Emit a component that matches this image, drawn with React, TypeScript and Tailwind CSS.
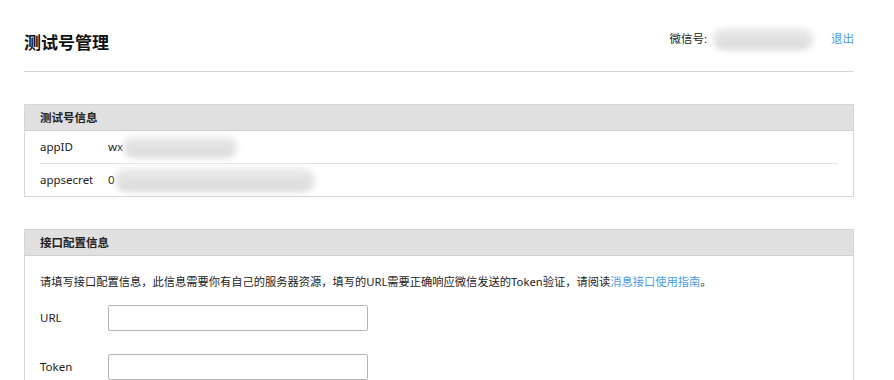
const font = { fontFamily: '"Noto Sans", "Noto Sans CJK SC", sans-serif' };

function Blur({ className }: { className: string }) {
  return (
    <span
      className={`inline-block rounded-full blur-[3px] bg-gradient-to-b from-[#ececec] to-[#d9d9d9] ${className}`}
    />
  );
}

function Panel({ title, children }: { title: string; children: React.ReactNode }) {
  return (
    <div className="border border-[#d6d6d6]">
      <div className="h-[26px] px-[15px] flex items-center bg-[#e0e0e0] border-b border-[#cfcfcf] text-[11.5px] font-bold text-[#222]">
        {title}
      </div>
      {children}
    </div>
  );
}

function InfoRow({ label, last, children }: { label: string; last?: boolean; children: React.ReactNode }) {
  return (
    <div className={`flex items-center ${last ? "h-[32px]" : "h-[33px] border-b border-[#e4e4e4]"}`}>
      <span className="w-[68px]">{label}</span>
      <span className="flex items-center">{children}</span>
    </div>
  );
}

function Field({ label }: { label: string }) {
  return (
    <div className="flex items-center h-[26px]">
      <span className="w-[68px]">{label}</span>
      <input className="w-[260px] h-[26px] rounded-[2px] border border-[#b5b5b5] bg-white outline-none" />
    </div>
  );
}

export default function App() {
  return (
    <div className="w-[894px] h-[380px] overflow-hidden bg-white text-[11.5px] text-[#222]" style={font}>
      <div className="ml-6 w-[830px]">
        <div className="h-[72px] flex justify-between items-start border-b border-[#d5d5d5]">
          <h1 className="pt-[31px] text-[17px] leading-[24px] font-bold text-[#111]">测试号管理</h1>
          <div className="pt-[28px] flex items-center">
            <span className="leading-[20px]">微信号:</span>
            <Blur className="ml-[6px] w-[100px] h-[22px] rounded-[10px]" />
            <a className="ml-[18px] text-[#4a9be6] leading-[20px]">退出</a>
          </div>
        </div>

        <div className="mt-8">
          <Panel title="测试号信息">
            <div className="mx-[15px]">
              <InfoRow label="appID">
                <span>wx</span>
                <Blur className="w-[114px] h-[22px] rounded-[8px]" />
              </InfoRow>
              <InfoRow label="appsecret" last>
                <span>0</span>
                <Blur className="w-[200px] h-[24px] rounded-[12px]" />
              </InfoRow>
            </div>
          </Panel>
        </div>

        <div className="mt-8">
          <Panel title="接口配置信息">
            <div className="px-[15px] pt-[16px]">
              <p className="text-[11.25px] leading-[20px]">
                请填写接口配置信息，此信息需要你有自己的服务器资源，填写的URL需要正确响应微信发送的Token验证，请阅读
                <a className="text-[#4a9be6]">消息接口使用指南</a>。
              </p>
              <div className="mt-[13px] flex flex-col gap-[23px]">
                <Field label="URL" />
                <Field label="Token" />
              </div>
            </div>
          </Panel>
        </div>
      </div>
    </div>
  );
}
